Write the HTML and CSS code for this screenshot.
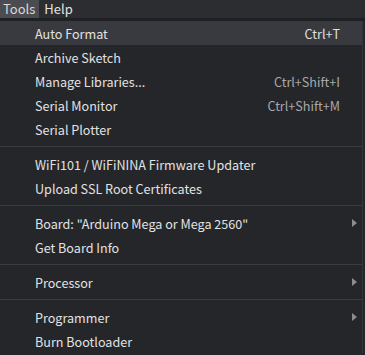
FILE: index.html
```html
<!DOCTYPE html>
<html lang="en">
<head>
    <meta charset="UTF-8">
    <title>Tools menu</title>
    <link rel="stylesheet" href="styles.css">
</head>
<body>
    <!-- Menu bar -->
    <div class="menubar">
        <span class="menubar-item active">Tools</span>
        <span class="menubar-item">Help</span>
    </div>

    <!-- Tools dropdown -->
    <div class="menu">
        <div class="menu-item hover"><span>Auto Format</span><span class="shortcut">Ctrl+T</span></div>
        <div class="menu-item"><span>Archive Sketch</span></div>
        <div class="menu-item"><span>Manage Libraries...</span><span class="shortcut">Ctrl+Shift+I</span></div>
        <div class="menu-item"><span>Serial Monitor</span><span class="shortcut">Ctrl+Shift+M</span></div>
        <div class="menu-item"><span>Serial Plotter</span></div>
        <div class="sep"></div>
        <div class="menu-item"><span>WiFi101 / WiFiNINA Firmware Updater</span></div>
        <div class="menu-item"><span>Upload SSL Root Certificates</span></div>
        <div class="sep"></div>
        <div class="menu-item"><span>Board: "Arduino Mega or Mega 2560"</span><span class="arrow"></span></div>
        <div class="menu-item"><span>Get Board Info</span></div>
        <div class="sep"></div>
        <div class="menu-item"><span>Processor</span><span class="arrow"></span></div>
        <div class="sep"></div>
        <div class="menu-item"><span>Programmer</span><span class="arrow"></span></div>
        <div class="menu-item"><span>Burn Bootloader</span></div>
    </div>
</body>
</html>
```

FILE: styles.css
```css
body {
    margin: 0;
    background-color: #25262a;
    font-family: "Noto Sans CJK SC", "Noto Sans", sans-serif;
    font-size: 12.6px;
    color: #e2e2e2;
}
.menubar {
    display: flex;
    height: 18px;
    background-color: #2c2d31;
    border-bottom: 3px solid #1f2023;
    font-size: 13px;
}
.menubar-item {
    padding: 0 4px 0 3px;
    line-height: 18px;
    margin-right: 2px;
}
.menubar-item.active {
    background-color: #4b4c51;
    color: #d8d8d8;
}
.menu {
    display: flex;
    flex-direction: column;
    border-right: 1px solid #35363b;
    margin-right: 2px;
}
.menu-item {
    display: flex;
    align-items: center;
    justify-content: space-between;
    height: 24px;
    padding: 0 5px 0 35px;
}
.menu-item.hover {
    background-color: #393a3f;
}
.shortcut {
    color: #a9a9a9;
    margin-right: 17px;
}
.menu-item.hover .shortcut {
    color: #e0e0e0;
}
.arrow {
    width: 0;
    height: 0;
    border-top: 4px solid transparent;
    border-bottom: 4px solid transparent;
    border-left: 5px solid #8c8c8c;
}
.sep {
    height: 1px;
    margin: 5px 0;
    background-color: #3b3c41;
}
```
